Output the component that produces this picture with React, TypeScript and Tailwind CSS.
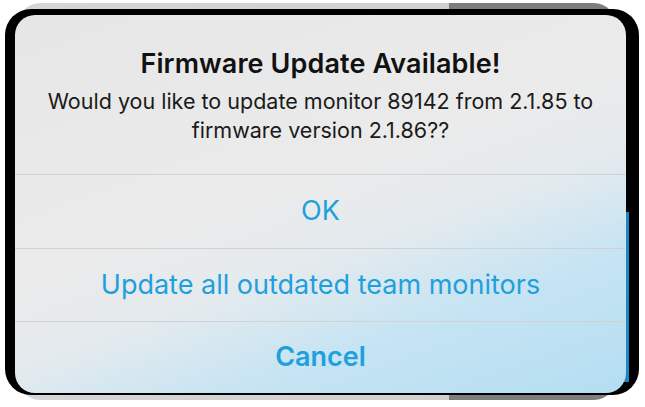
import React from 'react';

const buttons = [
  { label: 'OK', h: 'h-[74px]', weight: 'font-normal' },
  { label: 'Update all outdated team monitors', h: 'h-[74px]', weight: 'font-normal' },
  { label: 'Cancel', h: 'h-[72px]', weight: 'font-semibold' },
];

const App: React.FC = () => {
  return (
    <div className="relative w-[645px] h-[407px] bg-white overflow-hidden font-['Inter',sans-serif]">
      {/* device edge behind the frame */}
      <div className="absolute left-[18px] top-[3px] w-[598px] h-[397px] rounded-[22px] bg-[linear-gradient(90deg,#d6d6d6_0%,#d0d0d0_72%,#7d7d7d_72%,#7d7d7d_100%)]" />
      {/* black bezel */}
      <div className="absolute left-[5px] top-[9px] w-[634px] h-[386px] rounded-[26px] bg-black" />
      <div className="absolute left-[624px] top-[212px] w-[5px] h-[170px] bg-[#1f86c6]" />

      {/* alert */}
      <div className="absolute left-[15px] top-[15px] w-[611px] h-[378px] rounded-[20px] overflow-hidden flex flex-col bg-[linear-gradient(160deg,#e6e6e6_0%,#ebebeb_45%,#e3eaee_60%,#c6e4f3_76%,#b4def2_100%)]">
        <div className="flex flex-col items-center h-[160px] pt-[33px]">
          <h1 className="text-[27px] leading-[31px] font-semibold text-[#111] tracking-[0.1px]">
            Firmware Update Available!
          </h1>
          <p className="mt-[8px] text-[21.5px] leading-[29px] text-[#1a1a1a] text-center">
            Would you like to update monitor 89142 from 2.1.85 to
            <br />
            firmware version 2.1.86??
          </p>
        </div>
        {buttons.map((b) => (
          <div
            key={b.label}
            className={`flex items-center justify-center border-t border-[#cfd3d5] ${b.h}`}
          >
            <span className={`text-[27px] text-[#1fa0dc] ${b.weight}`}>{b.label}</span>
          </div>
        ))}
      </div>
    </div>
  );
};

export default App;
